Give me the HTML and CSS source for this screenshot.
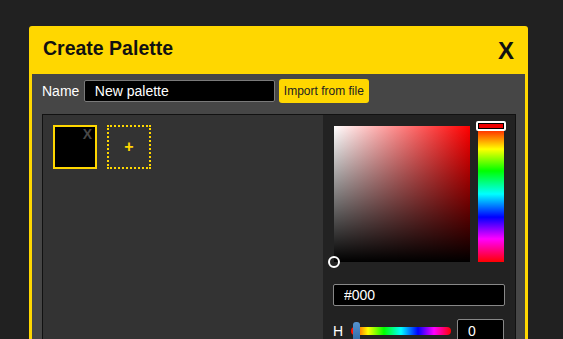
FILE: index.html
```html
<!DOCTYPE html>
<html>
<head>
<meta charset="utf-8">
<title>Create Palette</title>
<link rel="stylesheet" href="styles.css">
</head>
<body>
<div class="modal">
  <div class="modal-header">
    <h1 class="title">Create Palette</h1>
    <span class="close">X</span>
  </div>
  <div class="modal-body">
    <div class="name-row">
      <label class="name-label">Name</label>
      <input class="name-input" type="text" value="New palette">
      <button class="import-btn">Import from file</button>
    </div>
    <div class="panel">
      <div class="swatches">
        <div class="swatch"><span class="swatch-x">X</span></div>
        <div class="add-swatch">+</div>
      </div>
      <div class="picker">
        <div class="picker-top">
          <div class="sat"><span class="sat-marker"></span></div>
          <div class="hue"><span class="hue-handle"></span></div>
        </div>
        <input class="hex" type="text" value="#000">
        <div class="h-row">
          <span class="h-label">H</span>
          <div class="h-track"><span class="h-thumb"></span></div>
          <input class="h-num" type="text" value="0">
        </div>
      </div>
    </div>
  </div>
</div>
</body>
</html>
```
FILE: styles.css
```css
html, body {
  margin: 0;
  height: 100%;
}
body {
  background: #212121;
  font-family: "Liberation Sans", Arial, sans-serif;
  overflow: hidden;
  padding: 26px 0 0 29px;
  box-sizing: border-box;
}
.modal {
  width: 499px;
  box-sizing: border-box;
  background: #ffd700;
  border-radius: 3px 3px 0 0;
  padding: 0 3px;
  display: flex;
  flex-direction: column;
}
.modal-header {
  flex-shrink: 0;
  height: 48px;
  box-sizing: border-box;
  padding: 11px 11px 0 11px;
  display: flex;
  justify-content: space-between;
  align-items: flex-start;
}
.title {
  margin: 0;
  font-size: 19.5px;
  font-weight: bold;
  color: #111;
  line-height: normal;
}
.close {
  font-size: 24px;
  font-weight: bold;
  color: #111;
  line-height: normal;
}
.modal-body {
  background: #464646;
  padding: 5px 9px 0 10px;
}
.name-row {
  display: flex;
  align-items: center;
  height: 24px;
}
.name-label {
  font-size: 14px;
  color: #fff;
  margin-right: 4.5px;
}
.name-input {
  width: 191px;
  height: 22px;
  box-sizing: border-box;
  border: 1px solid #7a7a7a;
  border-radius: 2px;
  background: #000;
  color: #fff;
  font-family: inherit;
  font-size: 14px;
  padding: 0 10px;
  margin: 0 4px 0 0;
  outline: none;
}
.import-btn {
  width: 90px;
  height: 24px;
  border: none;
  border-radius: 3px;
  background: #ffd700;
  color: #222;
  font-family: inherit;
  font-size: 12px;
  padding: 0;
  margin: 0;
}
.panel {
  margin-top: 11px;
  border: 1px solid #111;
  display: flex;
  height: 300px;
}
.swatches {
  width: 280px;
  background: #333;
  padding: 10px;
  box-sizing: border-box;
  display: flex;
  align-items: flex-start;
  gap: 10px;
}
.swatch {
  width: 44px;
  height: 44px;
  box-sizing: border-box;
  border: 2px solid #ffd700;
  background: #000;
  position: relative;
}
.swatch-x {
  position: absolute;
  top: 0;
  right: 3px;
  font-size: 14px;
  line-height: 1;
  font-weight: bold;
  color: #474747;
}
.add-swatch {
  width: 44px;
  height: 44px;
  box-sizing: border-box;
  border: 2px dotted #ffd700;
  display: flex;
  align-items: center;
  justify-content: center;
  color: #ffd700;
  font-size: 16px;
  font-weight: bold;
}
.picker {
  flex: 1;
  background: #222;
  padding: 11px 10px 0 10px;
}
.picker-top {
  display: flex;
  gap: 8px;
  padding-left: 1px;
}
.sat {
  width: 136px;
  height: 136px;
  position: relative;
  background: linear-gradient(to top, #000, rgba(0,0,0,0)), linear-gradient(to right, #fff, #f00);
}
.sat-marker {
  position: absolute;
  left: -6px;
  bottom: -6px;
  width: 12px;
  height: 12px;
  box-sizing: border-box;
  border: 2px solid #fff;
  border-radius: 50%;
}
.hue {
  width: 26px;
  height: 136px;
  position: relative;
  background: linear-gradient(to bottom, #f00 0%, #ff0 17%, #0f0 33%, #0ff 50%, #00f 67%, #f0f 83%, #f00 100%);
}
.hue-handle {
  position: absolute;
  top: -5px;
  left: -2px;
  width: 30px;
  height: 10px;
  box-sizing: border-box;
  border: 2px solid #fff;
  border-radius: 2px;
  background: #e00;
  box-shadow: inset 0 0 0 1px #000;
}
.hex {
  display: block;
  margin: 22px 0 0 0;
  width: 172px;
  height: 22px;
  box-sizing: border-box;
  border: 1px solid #888;
  border-radius: 2px;
  background: #000;
  color: #fff;
  font-family: inherit;
  font-size: 14px;
  padding: 0 10px;
  outline: none;
}
.h-row {
  margin-top: 13px;
  display: flex;
  align-items: center;
  height: 24px;
}
.h-label {
  width: 18px;
  font-size: 14px;
  color: #fff;
}
.h-track {
  width: 100px;
  height: 8px;
  border-radius: 4px;
  position: relative;
  background: linear-gradient(to right, #f00 0%, #ff0 17%, #0f0 33%, #0ff 50%, #00f 67%, #f0f 83%, #f00 100%);
  margin-right: 6px;
}
.h-thumb {
  position: absolute;
  left: 2px;
  top: -5px;
  width: 7px;
  height: 20px;
  border-radius: 3px;
  background: linear-gradient(to bottom, #5593cf, #2e68a3);
}
.h-num {
  width: 47px;
  height: 24px;
  box-sizing: border-box;
  border: 1px solid #888;
  border-radius: 2px;
  background: #000;
  color: #fff;
  font-family: inherit;
  font-size: 14px;
  padding: 0 10px;
  margin: 0;
  outline: none;
}
```
